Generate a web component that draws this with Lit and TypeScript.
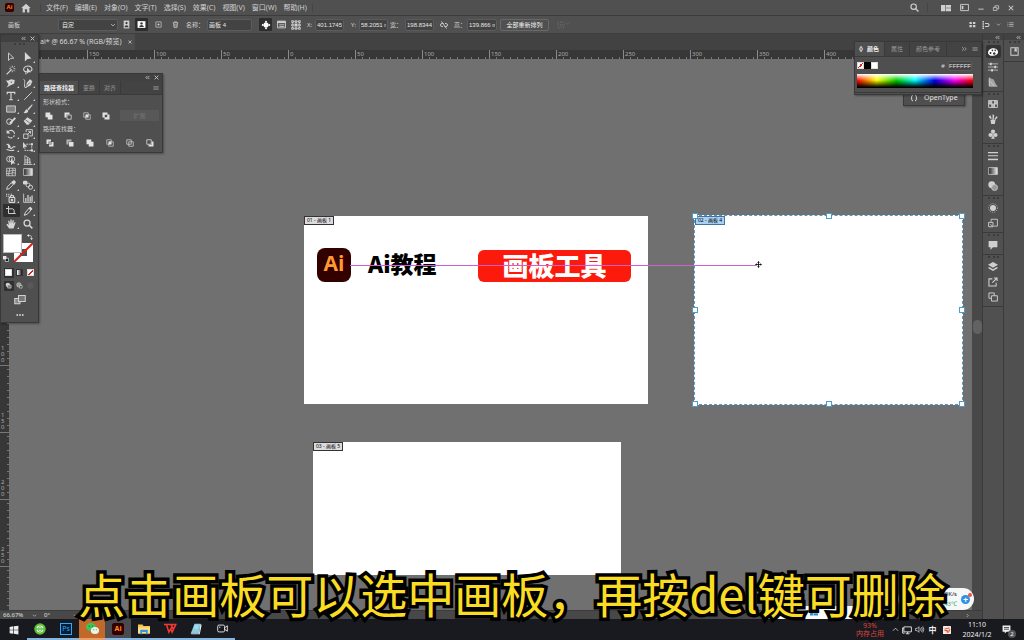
import { LitElement, html, css, svg, nothing } from "lit";
import { customElement, state } from "lit/decorators.js";
import { classMap } from "lit/directives/class-map.js";

// Every glyph is drawn on a 16 x 16 grid.
const GLYPHS: Record<string, unknown> = {
  home: svg`<path class="f" d="M8 1 15.5 8H13.4V15H9.8V10H6.2V15H2.6V8H.5Z"/>`,
  search: svg`<circle cx="6.5" cy="6.5" r="4.8" stroke-width="2"/><path d="m10 10 5 5" stroke-width="2.4"/>`,
  layout: svg`<path class="f" d="M0 3H7V13H0ZM8 3H16V7.5H8ZM8 8.5H16V13H8Z"/>`,
  window: svg`<path d="M1 2.5H15V13.5H1Z" stroke-width="1.6"/><path class="f" d="M3 5H6V11H3Z"/>`,
  min: svg`<path d="M1 11H15" stroke-width="2.4"/>`,
  restore: svg`<path d="M1 6.5H10V14.5H1ZM5 6V2H15V10.5H10.5" stroke-width="2"/>`,
  close: svg`<path d="M2 2 14 14M14 2 2 14" stroke-width="2.8"/>`,
  down: svg`<path d="m3 5.5 5 5 5-5" stroke-width="2"/>`,
  up: svg`<path d="m2 11 6-6 6 6" stroke-width="1.6"/>`,
  right: svg`<path d="m5.5 3 5 5-5 5" stroke-width="2"/>`,
  rewind: svg`<path d="M7.5 3 3 8l4.500 5M14 3 9.500 8l4.500 5" stroke-width="2.400"/>`,
  forward: svg`<path d="M3 3 7.500 8 3 13M9.500 3 14 8l-4.500 5" stroke-width="2"/>`,
  menu: svg`<path d="M1 4.500H15M1 8H15M1 11.500H15" stroke-width="1.500"/>`,
  portrait: svg`<path class="f" d="M3 1H13V15H3Z"/><circle class="k" cx="8" cy="5.500" r="2"/><path class="k" d="M4.500 13c0-5 7-5 7 0Z"/>`,
  landscape: svg`<path class="f" d="M1 2H15V14H1Z"/><circle class="k" cx="8" cy="6" r="2.200"/><path class="k" d="M4 12.500c0-5 8-5 8 0Z"/>`,
  add: svg`<path d="M2 2H14V14H2ZM8 5V11M5 8H11" stroke-width="1.500"/>`,
  trash: svg`<path d="M1.500 4H14.500M5.500 4V1.800H10.500V4M3.500 4.500 4.500 15H11.500L12.500 4.500M6.500 6.500V13M9.500 6.500V13" stroke-width="1.600"/>`,
  moveArt: svg`<path class="f" d="M4 4H12V12H4Z"/><path d="M8 0V16M0 8H16" stroke-width="2"/><path class="f" d="m8-1 3 4H5ZM8 17l3-4H5ZM-1 8l4-3v6ZM17 8l-4-3v6Z"/>`,
  list: svg`<path d="M1 2H15V14H1Z" stroke-width="1.600"/><path class="f" d="M1 2H15V5.500H1Z"/><path d="M4 8.500H13M4 11.500H13" stroke-width="1.500"/>`,
  refpoint: svg`<path d="M2.500 2.500H13.500V13.500H2.500Z" stroke-width="1"/><path d="M1 1H4V4H1ZM6.500 1H9.500V4H6.500ZM12 1H15V4H12ZM1 6.500H4V9.500H1ZM12 6.500H15V9.500H12ZM1 12H4V15H1ZM6.500 12H9.500V15H6.500ZM12 12H15V15H12Z" stroke-width="1.200"/><path class="f" d="M5.500 5.500H10.500V10.500H5.500Z"/>`,
  unlink: svg`<path d="M7 5H4a3 3 0 0 0 0 6h2M9 11h3a3 3 0 0 0 0-6h-2M3 1 13 15" stroke-width="1.800"/>`,
  dotGrid: svg`<path d="M2 2H14V14H2ZM8 2V14M2 8H14" stroke-width="1.500" stroke-dasharray="2 2"/>`,
  four: svg`<path class="f" d="M1 2H6.500V7H1ZM9 2H14.500V7H9ZM1 9H6.500V14H1ZM9 9H14.500V14H9Z"/>`,
  snap: svg`<path class="f" d="M1 0H4V3H1ZM1 4.500H4V7.500H1ZM1 9H4V12H1ZM1 13H4V16H1Z"/><path d="M6 5H11a3 3 0 0 1 0 6H6" stroke-width="2.200"/>`,
  bullets: svg`<path d="M1 4H3M5 4H15M1 8H3M5 8H15M1 12H3M5 12H15" stroke-width="1.500"/>`,
  select: svg`<path d="M4 1.500V13.500L7.300 10.300 12.500 9.800Z" stroke-width="1.400"/>`,
  direct: svg`<path class="f" d="M3 0V15L7.200 11 13.500 10.400Z"/>`,
  wand: svg`<path d="M1 15 9 7" stroke-width="2"/><path d="M10 1V4M10 8.500V11.500M5 6H8M12 6H15M6.500 2.500 8 4M12 4l2-2M12 8l2 2" stroke-width="1.300"/>`,
  lasso: svg`<path d="M6 11C1 11 .5 7 1.500 5 3.500 1 12 0 14 5c.8 2 0 4-2 5M6 10c-2 1-2 3-1 5" stroke-width="1.700"/><path class="f" d="M6.500 4V14L9 11.500 13 11.500Z"/>`,
  pen: svg`<path class="f" d="M0 4H4L8 2l6 1-1 6-5 2-7 4 3-5Z"/><circle class="k" cx="8.500" cy="6.500" r="1"/>`,
  curvature: svg`<path class="f" d="M5 15 6 8 11 2l4 3-3 7Z"/><path d="M1 2c4 3 0 7 2 13H6" stroke-width="1.500"/><path class="ks" d="m6 13 5-6" stroke-width="1"/>`,
  type: svg`<path d="M2 5V2.200H14V5M8 2.200V14M5 14H11" stroke-width="1.900"/>`,
  line: svg`<path d="M2 14 14 2" stroke-width="1.500"/>`,
  rect: svg`<path d="M1 3H15V13H1Z" fill="#808080" stroke-width="1.400"/>`,
  brush: svg`<path class="f" d="M14.500.5 7 8l2 2 6.500-8.500ZM6 8.500C3 9 4 12 .8 14.500c4 .5 8 0 7.500-4Z"/>`,
  shaper: svg`<circle cx="5.500" cy="9" r="4.500" stroke-width="1.600"/><path d="M6 12 15 3" stroke-width="3"/>`,
  eraser: svg`<path class="f" d="m1 8 6-6 8 5-6 7H6Z"/><path class="ks" d="m4 6 7 5.500" stroke-width="1"/>`,
  rotate: svg`<path d="M3 4.500A6 6 0 1 1 3 12" stroke-width="1.700" stroke-dasharray="14 2 3 2"/><path class="f" d="M1 1V7H7Z"/>`,
  scale: svg`<path d="M1 8H8V15H1ZM5 5V1H15V11H10M7 9l5-5M8.500 4H12V7.500" stroke-width="1.400"/>`,
  width: svg`<path d="M1 4c4-2 4 8 8 6s2-4 6-2M1 12c3 0 6 3 12 1" stroke-width="1.800"/><path class="f" d="M4 2 8 8 3 10Z"/>`,
  transform: svg`<path d="M5 3.500H14V13.500H3V8" stroke-width="1.300" stroke-dasharray="3 1"/><path class="f" d="M0 0V10L3 7.500H7ZM12.500 2H16V5H12.500ZM12.500 12H16V15H12.500Z"/>`,
  builder: svg`<circle cx="5.500" cy="6.500" r="4.500" stroke-width="1.400"/><circle cx="9.500" cy="6.500" r="4.500" stroke-width="1.400"/><path class="f" d="M8 6V16L10.500 13.500H15Z"/>`,
  perspective: svg`<path d="M3 1V15M3 1 11 6V15M3 8H11M7 4V15M1 15H15M3 11.500H13" stroke-width="1.300"/>`,
  mesh: svg`<path d="M1 2H15V14H1ZM1 6c4 3 9-3 14 0M1 10c4 3 9-3 14 0M5 2c3 4-3 8 0 12M10.500 2c3 4-3 8 0 12" stroke-width="1.200"/>`,
  gradient: svg`<defs><linearGradient id="tg"><stop stop-color="#222"/><stop offset="1" stop-color="#eee"/></linearGradient></defs><path d="M1 2.500H15V13.500H1Z" fill="url(#tg)" stroke-width="1.200"/>`,
  dropper: svg`<path d="m1 15 1-4 6.500-6.500 3 3L5 14Z" stroke-width="1.500"/><path class="f" d="m8 3 5-3 3 3-3 5Z"/>`,
  blend: svg`<rect class="f" x="0" y="1" width="7" height="6" rx="2"/><circle cx="8" cy="8" r="3.200" stroke-width="1.300"/><circle cx="12" cy="11.500" r="3.300" stroke-width="1.500"/>`,
  spray: svg`<rect x="5" y="7" width="9" height="8" rx="1" stroke-width="1.800"/><path d="M7 6.500V4H12V6.500M8.500 3V1M0 2H2M3.500 2H5.500M0 5H2M3 5H5" stroke-width="1.600"/><circle class="f" cx="9.500" cy="11" r="2"/>`,
  graph: svg`<path d="M1 1V15H15" stroke-width="1.300"/><path d="M4.500 14V8M8 14V3M11.500 14V6M14.500 14V4" stroke-width="2"/>`,
  artboard: svg`<path d="M4 0V12H15.500M0 4H4M4 4.500H11L13 6.500V12" stroke-width="1.500"/>`,
  slice: svg`<path d="M2 15 4 10 11 2l3 3-7 8Z" stroke-width="1.600"/><path class="f" d="m9 4 3-3 3 3-3 3Z"/>`,
  hand: svg`<path class="f" d="M5 15 1 9.500c-.5-1.500 1-2 2-1L4.500 10 3.500 3.500c0-1.500 1.700-1.500 2 0L6.500 7 7 1.500c0-1.500 2-1.500 2 0L9.200 7l1.300-4.500c.5-1.300 2.200-.9 2 .5L11.800 8l1.700-2.500c1-1 2.200 0 1.500 1.200L12 15Z"/>`,
  pfUnite: svg`<path class="f" d="M1 1H10.500V5.500H15V15H5.500V10.500H1Z"/>`,
  pfMinus: svg`<path class="f" d="M1 1H11V5H5V11H1Z"/><path d="M6 6H14.500V14.500H6Z" stroke-width="1.400"/>`,
  pfInter: svg`<path d="M1.500 1.500H10.500V10.500H1.500ZM5.500 5.500H14.500V14.500H5.500Z" stroke-width="1.200"/><path class="f" d="M5.500 5.500H10.500V10.500H5.500Z"/>`,
  pfExcl: svg`<path class="f" fill-rule="evenodd" d="M1 1H11V5H15V15H5V11H1ZM5.500 5.500V10.500H10.500V5.500Z"/>`,
  pfDivide: svg`<path class="f" d="M1 1H10V5H5V10H1ZM11 6H15V15H6V11H11Z"/><path d="M6.500 6.500H9.500V9.500H6.500Z" stroke-width="1.300"/>`,
  pfTrim: svg`<path class="f" opacity=".7" d="M1 1H11V5H5V11H1Z"/><path class="f" d="M6 6H15V15H6Z"/>`,
  pfOutline: svg`<path d="M1.500 1.500H10.500V10.500H1.500ZM5.500 5.500H14.500V14.500H5.500Z" stroke-width="1.300"/>`,
  pfBack: svg`<path d="M1.500 1.500H10.500V10.500H1.500Z" stroke-width="1.500"/><path class="f" d="M11.500 5H15V15H5V11.500H11.500Z"/>`,
  palette: svg`<path class="f" fill-rule="evenodd" d="M9 2C4 2 0 5 0 9c0 3 3 5 7 5 5 0 9-2 9-6 0-4-4-6-7-6ZM4 8a1.500 1.500 0 1 0 .1 0ZM7 4a1.300 1.300 0 1 0 .1 0ZM11.500 4a1.300 1.300 0 1 0 .1 0ZM10 8.500a2 2 0 1 0 .1 0Z"/>`,
  sliders: svg`<path d="M0 3H16M0 8H16M0 13H16" stroke-width="1.200"/><path class="f" d="M3 1H6V5H3ZM10 6H13V10H10ZM5 11H8V15H5Z"/>`,
  guide: svg`<path class="f" d="M2 1 9 4 14 14H2Z" opacity=".65"/><path d="M2 1V14.500H15M2 6 10 14" stroke-width="1.500"/>`,
  swatches: svg`<path d="M1 2.500H15V13.500H1ZM1 8H15M6 2.500V13.500M10.500 2.500V13.500" stroke-width="1.400"/><path class="f" d="M1 2.500H6V8H1ZM10.500 2.500H15V8H10.500ZM6 8H10.500V13.500H6Z" opacity=".8"/>`,
  brushes: svg`<path class="f" d="M4 9H12L11 16H5ZM7 9 7.500 0 10 2 9 9ZM4 8 1 4 4 2 6 7ZM10 8 14 3 15.500 5 12 9Z"/>`,
  club: svg`<circle class="f" cx="8" cy="4" r="3.300"/><circle class="f" cx="4" cy="9.500" r="3.300"/><circle class="f" cx="12" cy="9.500" r="3.300"/><path class="f" d="M7.200 6H8.800L9 11 11 15.500H5L7 11Z"/>`,
  lines: svg`<path d="M0 2.500H16M0 7.500H16" stroke-width="1.800"/><path d="M0 13.500H16" stroke-width="2.500"/>`,
  spheres: svg`<circle class="f" cx="6" cy="6" r="5.500"/><circle cx="10.500" cy="10.500" r="4.800" fill="#999" stroke-width="1.200"/>`,
  sun: svg`<circle class="f" cx="8" cy="8" r="4.800"/><circle cx="8" cy="8" r="7" stroke-width="1.200" stroke-dasharray="1.500 2"/>`,
  styles: svg`<path d="M5 6V2H15V13H9" stroke-width="1.400"/><path d="M1 7H8V14H1ZM4 10 7 13" stroke-width="1.500"/>`,
  comment: svg`<path class="f" d="M1 1.500H15V11.500H8L4 15.500V11.500H1Z"/>`,
  layers: svg`<path class="f" d="m8 0 8 4.500L8 9 0 4.500Z"/><path class="f" d="m2 8 6 3.500L14 8l2 1.500L8 14.500 0 9.500Z"/>`,
  exportIc: svg`<path d="M7 3H1.500V14.500H13V9M7 9 14 2M9.500 1.500H14.500V6.500" stroke-width="1.700"/>`,
  boards: svg`<path d="M10 6V1.500H1.500V10H5M5.500 6H15V14.500H5.500Z" stroke-width="1.500"/>`,
  library: svg`<path d="M1.500 1.500H14.500V14.500H1.500Z" stroke-width="1.800"/><path class="f" d="M8 2H12V9L10 7.500 8 9Z"/>`,
  swap: svg`<path d="M3 4H8Q12 4 12 9V12" stroke-width="1.700"/><path class="f" d="M5 0V8L0 4ZM8 11H16L12 16Z"/>`,
  defaults: svg`<path d="M6 6H14.500V14.500H6Z" fill="#111" stroke-width="1.800"/><path class="f" d="M0 0H9V9H0Z"/>`,
  modeN: svg`<circle class="f" cx="6.500" cy="6.500" r="5"/><path d="M6 7H14V14H6Z" fill="#777" stroke-width="1.400"/>`,
  modeO: svg`<circle cx="6.500" cy="6.500" r="5" fill="#999" stroke-width="1.300"/><path d="M8 8H14V14H8Z" fill="#555" stroke-width="1.400"/>`,
  modeI: svg`<circle cx="8" cy="8" r="6" stroke-width="1.200"/><path d="M5.500 5.500H10.500V10.500H5.500Z" stroke-width="1"/>`,
  screens: svg`<path d="M1 6H8V13H1Z" fill="#888" stroke-width="1.400"/><path d="M6 2H15V10H6Z" fill="#777" stroke-width="1.400"/>`,
  dots: svg`<circle class="f" cx="2.500" cy="8" r="1.900"/><circle class="f" cx="8" cy="8" r="1.900"/><circle class="f" cx="13.500" cy="8" r="1.900"/>`,
  cursor: svg`<path d="M8 2V14M2 8H14" stroke-width="2"/><path class="f" d="m8 0 3 4H5ZM8 16l3-4H5ZM0 8l4-3v6ZM16 8l-4-3v6Z"/>`,
  braces: svg`<path d="M6 2Q3 2 3 8t3 6M10 2q3 0 3 6t-3 6" stroke-width="1.700"/>`,
  // Taskbar glyphs carry their own colours.
  win: svg`<path class="f" d="M1 3 7 2V7.600H1ZM8 1.900 15 1V7.600H8ZM1 8.500H7V14L1 13.200ZM8 8.500H15V15L8 14.100Z"/>`,
  browser: svg`<circle cx="8" cy="8" r="7.700" fill="#5cbf3a" stroke="none"/><circle cx="8" cy="8" r="4.600" fill="#eaf8e0" stroke="none"/><path d="M3 8H13" stroke="#5cbf3a" stroke-width="2"/><path d="M5.500 6.500 8 4.500l2.500 2M5.500 9.500 8 11.500l2.500-2" stroke="#3aa02c"/>`,
  wechat: svg`<ellipse cx="6" cy="6" rx="6" ry="5.200" fill="#3fc456" stroke="none"/><ellipse cx="11" cy="10.500" rx="5" ry="4.400" fill="#e9f6e6" stroke="none"/><circle cx="4" cy="5" r=".8" fill="#165" stroke="none"/><circle cx="8" cy="5" r=".8" fill="#165" stroke="none"/><circle cx="9.500" cy="9.500" r=".7" fill="#576" stroke="none"/><circle cx="12.700" cy="9.500" r=".7" fill="#576" stroke="none"/>`,
  folder: svg`<path d="M0 2H6L7.500 4H16V14H0Z" fill="#f3c64c" stroke="none"/><path d="M0 6H16V14H0Z" fill="#fbdf8b" stroke="none"/><path d="M3 9H13V15H10.500V12H5.500V15H3Z" fill="#3b95dd" stroke="none"/>`,
  wps: svg`<path d="M0 3H8.500L11 8.500M3 3 6 12.500 10.500 4.500M8 8l2 4.500L14.500 3H9" stroke="#ef3a2d" stroke-width="1.900"/>`,
  note: svg`<path d="M6 1H14L12 14H1Z" fill="#8ccbdf" stroke="none"/><path d="m14 1 1.500 1.500L13 15H2L1 14H12Z" fill="#e8f4f8" stroke="none"/><path d="M6 4H11M5.500 6.500H10.500" stroke="#d7f2fa"/>`,
  camera: svg`<rect x="1" y="3" width="10" height="10" rx="2" stroke-width="1.300"/><path d="M11 7 15 4V12L11 9" stroke-width="1.300"/><circle class="f" cx="4" cy="6" r="1"/>`,
  monitor: svg`<path d="M3 3H15V11H3ZM6 14H12M9 11V14M3 5H0M1 5V13H4" stroke-width="1.400"/>`,
  speaker: svg`<path d="M1 6H4L7 3V13L4 10H1ZM9.500 6q1.500 2 0 4M11.500 4q3 4 0 8M13.700 2.500q4 5.500 0 11" stroke-width="1.200"/>`,
  ime: svg`<rect width="16" height="16" rx="1" fill="#f3ece6" stroke="none"/><path d="M3 6 13 4M3 9H8V13M10 8 9 13M14 6 11 13" stroke="#e2502f" stroke-width="2"/>`,
  notice: svg`<path class="f" d="M1 1H15V12H8L5 15V12H1Z"/><path d="M3.500 4.500H12.500M3.500 7.500H12.500" stroke="#1a1b20" stroke-width="1.300"/>`,
};

const icon = (name: string, size = 11) =>
  html`<svg class="ic" viewBox="0 0 16 16" width=${size} height=${size} aria-hidden="true">${GLYPHS[name]}</svg>`;

const MENUS = ["文件(F)", "编辑(E)", "对象(O)", "文字(T)", "选择(S)", "效果(C)", "视图(V)", "窗口(W)", "帮助(H)"];

const TOOLS = [
  "select", "direct", "wand", "lasso", "pen", "curvature", "type", "line", "rect", "brush",
  "shaper", "eraser", "rotate", "scale", "width", "transform", "builder", "perspective",
  "mesh", "gradient", "dropper", "blend", "spray", "graph", "artboard", "slice", "hand", "search",
];
const PLAIN_TOOLS = new Set(["select", "wand", "lasso", "mesh", "gradient", "artboard", "search"]);

const DOCK = [
  ["palette", "sliders", "guide"],
  ["swatches", "brushes", "club"],
  ["lines", "gradient", "spheres"],
  ["sun", "styles"],
  ["comment"],
  ["layers", "exportIc", "boards"],
];

const H_MARKS = [200, 150, 100, 50, 0, 50, 100, 150, 200, 250, 300, 350, 400];
const V_MARKS = ["", "", "", "", "100", "150", "200", "250", ""];
const HANDLES = ["nw", "n", "ne", "w", "e", "sw", "s", "se"];

@customElement("app-root")
export class AppRoot extends LitElement {
  @state() private tool = "artboard";

  static styles = css`
    :host {
      display: flex;
      flex-direction: column;
      height: 100vh;
      overflow: hidden;
      background: #505051;
      color: #d0d0d0;
      font: 6px/8px "Noto Sans", "Noto Sans CJK SC", sans-serif;
      position: relative;
    }
    * { box-sizing: border-box; }
    button, input, select {
      font: inherit;
      color: inherit;
      background: none;
      border: 0;
      padding: 0;
      margin: 0;
      border-radius: 0;
      min-width: 0;
      appearance: none;
      white-space: nowrap;
    }
    button { display: inline-flex; align-items: center; justify-content: center; }
    .ic { display: block; flex: none; fill: none; stroke: currentColor; overflow: visible; }
    .ic .f { fill: currentColor; stroke: none; }
    .ic .k { fill: #3a3a3a; stroke: none; }
    .ic .ks { stroke: #3a3a3a; }

    .menubar {
      flex: none;
      display: flex;
      align-items: center;
      height: 16px;
      padding: 0 6px 0 5px;
      border-bottom: 1px solid #3b3b3b;
      font-size: 7px;
    }
    .logo {
      width: 9px;
      height: 9px;
      border-radius: 2px;
      background: #330000;
      color: #ff7a18;
      font-weight: 700;
      font-size: 6px;
      text-align: center;
    }
    .home { margin: 0 9px 0 7px; }
    .menus { display: flex; gap: 7px; padding: 0 5px; border: solid #444; border-width: 0 1px; }
    .winctl { margin-left: auto; display: flex; align-items: center; }
    .winctl button { width: 15px; }
    .winctl .big { width: 18px; height: 12px; }
    .winctl .find { width: 24px; border-right: 1px solid #444; margin-right: 9px; }
    .winctl .find { padding-right: 2px; }

    .options {
      flex: none;
      display: grid;
      grid-template-columns: 50px 60px 17px 13px 20px 15px 24px 45px 20px 18px 11px 14px 29px 15px 29px 17px 29px 20px 13px 30px 52px 28px 1fr auto;
      align-items: center;
      height: 18px;
      padding: 0 10px 0 8px;
      border-bottom: 1px solid #3f3f3f;
    }
    .options > button, .options > .mid { display: flex; justify-content: center; }
    .options > label { text-align: right; padding-right: 3px; white-space: nowrap; }
    .field, .pick {
      height: 12px;
      width: 100%;
      background: #434343;
      border: 1px solid #5c5c5c;
      border-radius: 2px;
      padding: 0 1px;
      color: #e6e6e6;
      font-family: "Liberation Sans", "Noto Sans CJK SC", sans-serif;
    }
    .picker { position: relative; display: flex; }
    .pick { padding-left: 3px; }
    .picker .ic { position: absolute; right: 2px; top: 3px; pointer-events: none; }
    .lit { background: #2d2d2d; border-radius: 1px; height: 13px; width: 13px; justify-self: end; color: #fff; }
    .realign { justify-self: end; width: 49px; height: 12px; border: 1px solid #696969; border-radius: 2px; color: #f0f0f0; }
    .dim { color: #6d6d6d; }
    .endctl { display: flex; gap: 6px; align-items: center; }

    .work { flex: 1; min-height: 0; display: flex; position: relative; }
    .doc { flex: 1; min-width: 0; display: flex; flex-direction: column; background: #424242; }
    .tabs { flex: none; height: 16px; display: flex; padding-left: 39px; }
    .tab {
      display: flex;
      align-items: center;
      gap: 6px;
      background: #4d4d4d;
      padding: 0 3px 0 1px;
      font-size: 7px;
      white-space: nowrap;
      color: #d8d8d8;
    }
    .hruler {
      flex: none;
      height: 9px;
      display: flex;
      overflow: hidden;
      padding-left: 20px;
      background: #373737;
      color: #a8a8a8;
      line-height: 9px;
    }
    .hruler span {
      flex: none;
      width: 67px;
      padding-left: 1px;
      border-left: 1px solid #8a8a8a;
      background: repeating-linear-gradient(90deg, transparent 0 6px, #777 6px 7px) left bottom / 100% 2px no-repeat;
    }
    .stage { flex: 1; min-height: 0; display: flex; }
    .vruler {
      flex: none;
      width: 9px;
      overflow: hidden;
      display: flex;
      flex-direction: column;
      background: #373737;
      color: #a8a8a8;
      line-height: 6px;
    }
    .vruler span {
      flex: none;
      height: 67px;
      display: flex;
      flex-direction: column;
      justify-content: flex-end;
      padding: 0 0 2px 1px;
      border-bottom: 1px solid #777;
      background: repeating-linear-gradient(0deg, transparent 0 6px, #777 6px 7px) right bottom / 2px 100% no-repeat;
    }
    .vruler span:first-child { height: 39px; }
    .vruler i { font-style: normal; }
    .canvas { flex: 1; min-width: 0; position: relative; overflow: hidden; background: #707070; }
    .vscroll { flex: none; width: 10px; background: #484848; position: relative; }
    .thumb { position: absolute; left: 1px; right: 0; top: 261px; height: 14px; border-radius: 5px; background: #626264; }

    .board { position: absolute; background: #fff; color: #000; }
    .b1 { left: 295px; top: 157px; width: 344px; height: 188px; padding: 32px 17px 0 13px; display: flex; align-items: flex-start; }
    .b2 { left: 685px; top: 156px; width: 269px; height: 190px; border: 1px dashed #4f9ac6; }
    .b3 { left: 304px; top: 383px; width: 308px; height: 133px; }
    .tag {
      position: absolute;
      left: 0;
      top: 0;
      width: 30px;
      height: 9px;
      border: 1px solid #333;
      background: #dcdcdc;
      font-size: 5px;
      line-height: 7px;
      text-align: center;
      white-space: nowrap;
    }
    .b2 .tag { background: #a8d1f2; border-color: #3f76a5; }
    .h { position: absolute; width: 4px; height: 4px; margin: -2px; background: #fff; outline: 1px solid #4f9ac6; }
    .h.nw, .h.w, .h.sw { left: 0; }
    .h.n, .h.s { left: 50%; }
    .h.ne, .h.e, .h.se { left: 100%; }
    .h.nw, .h.n, .h.ne { top: 0; }
    .h.w, .h.e { top: 50%; }
    .h.sw, .h.s, .h.se { top: 100%; }
    .ailogo {
      width: 34px;
      height: 34px;
      border-radius: 8px;
      background: #330000;
      color: #ff9a2e;
      font: 700 21px/31px "Open Sans", "Noto Sans", sans-serif;
      text-align: center;
    }
    .title { margin-left: 17px; font: 900 23px/31px "Noto Sans CJK SC", sans-serif; }
    .badge {
      margin-left: auto;
      margin-top: 2px;
      width: 153px;
      height: 32px;
      border-radius: 6px;
      background: #fb1a0c;
      color: #fff;
      font: 900 26px/30px "Noto Sans CJK SC", sans-serif;
      text-align: center;
    }
    .guideline { position: absolute; left: 341px; top: 206px; width: 406px; height: 1px; background: #d05fd6; }
    .pointer { position: absolute; left: 746px; top: 202px; color: #111; }

    .status {
      flex: none;
      height: 9px;
      display: flex;
      align-items: center;
      gap: 7px;
      padding: 0 12px 0 3px;
      background: #484848;
      border-top: 1px solid #3c3c3c;
      line-height: 8px;
    }
    .status input { width: 22px; height: 8px; color: #e0e0e0; }
    .status .end { margin-left: auto; }

    .dock { flex: none; width: 21px; border-left: 1px solid #3a3a3a; background: #505051; display: flex; flex-direction: column; }
    .dock .fold { height: 6px; background: #424242; display: flex; align-items: center; justify-content: flex-end; padding-right: 3px; }
    .dgroup { display: flex; flex-direction: column; align-items: center; border-bottom: 1px solid #3a3a3a; padding-bottom: 2px; }
    .grip { width: 11px; height: 2px; margin: 1px auto; border-top: 2px dotted #3b3b3b; flex: none; }
    .dgroup button { width: 15px; height: 15px; color: #cfcfcf; }
    .dgroup button.on { background: #333; color: #fff; border-radius: 2px; height: 13px; margin: 1px 0; }

    .panel { position: absolute; background: #4f4f50; border: 1px solid #393939; box-shadow: 1px 1px 2px #0005; }
    .phead { display: flex; align-items: center; justify-content: flex-end; gap: 4px; background: #414141; height: 7px; padding-right: 3px; }
    .ptabs { display: flex; background: #434343; border-bottom: 1px solid #3a3a3a; color: #999; }
    .ptabs button { padding: 0 4px; border-right: 1px solid #3a3a3a; }
    .ptabs button.on { background: #4f4f50; color: #f0f0f0; font-weight: 700; }
    .ptabs .more { margin-left: auto; display: flex; align-items: center; gap: 5px; padding-right: 3px; color: #b0b0b0; }

    .tools { left: 0; top: 0; width: 39px; }
    .tgrid { display: grid; grid-template: repeat(14, 1fr) / 1fr 1fr; height: 179px; margin: 6px 2px 0; }
    .tgrid button { position: relative; color: #d6d6d6; }
    .tgrid button.on { background: #2f2f2f; border-radius: 1px; }
    .tgrid button.sub::after { content: ""; position: absolute; right: 1px; bottom: 1px; border: 1px solid; border-color: transparent #ccc #ccc transparent; }
    .paint { position: relative; height: 30px; margin: 4px 0 2px; color: #e8e8e8; }
    .paint .fill { position: absolute; left: 2px; top: 0; width: 19px; height: 19px; background: #fff; border: 1px solid #bbb; }
    .paint .stroke { position: absolute; left: 13px; top: 9px; }
    .paint .sw { position: absolute; left: 26px; top: 0; }
    .paint .df { position: absolute; left: 2px; top: 22px; }
    .trow { display: grid; grid-template-columns: repeat(3, 11px); height: 13px; padding-left: 2px; align-items: center; justify-items: center; }
    .trow button { width: 10px; height: 10px; }
    .trow button.on { background: #303030; }
    .chip { width: 7px; height: 7px; border: 1px solid #ddd; background: #fff; }
    .chip.g { background: linear-gradient(90deg, #fff, #111); border-color: #333; }
    .chip.n { background: linear-gradient(135deg, #fff 40%, #e0241b 40% 60%, #fff 60%); }
    .chip.b { background: #000; border-color: #000; }
    .tmore { display: flex; justify-content: center; height: 15px; align-items: center; }

    .path { left: 39px; top: 39px; width: 124px; height: 80px; }
    .path .ptabs { height: 14px; }
    .path .body { padding: 2px 3px 0; }
    .path .caption { height: 10px; line-height: 10px; }
    .prow { display: flex; align-items: center; height: 17px; }
    .prow button { flex: none; width: 19px; padding-right: 8px; color: #e2e2e2; }
    .prow.six { padding-left: 1px; }
    .prow.six button { width: 20px; }
    .prow .expand { width: 39px; height: 11px; padding: 0; margin-left: 1px; background: #585858; color: #737373; }

    .color { left: 854px; top: 7px; width: 128px; height: 54px; }
    .color .ptabs { height: 15px; }
    .color .ptabs button { padding: 0 6px; }
    .color .ptabs button:first-child { padding: 0 5px 0 3px; gap: 3px; }
    .crow { display: flex; align-items: center; padding: 3px 9px 3px 2px; height: 17px; }
    .crow label { margin-left: auto; padding-right: 3px; }
    .crow .field { width: 24px; height: 10px; padding: 0; text-align: center; }
    .spectrum {
      height: 14px;
      margin: 0 8px 0 2px;
      background:
        linear-gradient(#fff 0, #fff0 45%, #0000 45%, #000 95%),
        linear-gradient(90deg, #f00, #ff0 17%, #0c0 34%, #0ff 50%, #00e 67%, #f0f 84%, #f00);
    }
    .foot { margin-top: 4px; border-top: 1px solid #3a3a3a; }
    .otype { left: 903px; top: 50px; width: 62px; height: 22px; padding: 9px 6px 0; display: flex; gap: 6px; font-size: 7px; color: #e8e8e8; line-height: 8px; }

    .netpill {
      position: absolute;
      right: 50px;
      bottom: 30px;
      width: 76px;
      height: 22px;
      border-radius: 11px;
      background: #f6f8f7;
      color: #222;
      display: flex;
      align-items: center;
      justify-content: flex-end;
      gap: 4px;
      padding-right: 4px;
    }
    .netpill .temp { color: #2da860; }
    .netpill p { margin: 0; line-height: 10px; text-align: right; }
    .plus { width: 9px; height: 9px; border-radius: 50%; background: #2d8fe8; color: #fff; font: 700 9px/9px "Noto Sans", sans-serif; text-align: center; position: relative; }
    .plus::after { content: ""; position: absolute; right: -2px; top: -2px; width: 4px; height: 4px; border-radius: 50%; background: #f0503c; }
    .imebar { position: absolute; left: 764px; bottom: 21px; width: 100px; height: 13px; border-radius: 5px; background: #f8fafc; display: flex; align-items: center; justify-content: space-evenly; color: #2e8ecb; }

    .subtitle {
      position: absolute;
      left: 0;
      right: 0;
      bottom: 22px;
      margin: 0;
      text-align: center;
      white-space: nowrap;
      font: 400 47px/50px "Noto Sans CJK SC", sans-serif;
      color: #fadd22;
      -webkit-text-stroke: 7px #000;
      paint-order: stroke fill;
      stroke-linejoin: round;
      pointer-events: none;
    }

    .taskbar { flex: none; height: 21px; display: flex; background: #191a1f; color: #eee; }
    .taskbar .app { width: 26px; border-bottom: 2px solid #86b5dd; }
    .taskbar .start { width: 27px; }
    .taskbar .app.hot { background: #c2682b; border-color: #e9a06a; }
    .taskbar .app.cur { background: #4a4b50; }
    .sq { width: 12px; height: 12px; border: 1px solid #31a8ff; background: #001e36; color: #31a8ff; font-size: 7px; line-height: 10px; text-align: center; }
    .sq.ai { border-color: #330000; background: #330000; color: #ff8a1e; font-weight: 700; border-radius: 2px; }
    .tray { margin-left: auto; display: flex; align-items: center; gap: 3px; padding-right: 13px; }
    .mem { color: #d9463e; text-align: center; line-height: 8px; font-size: 7px; padding: 1px 5px 0 0; }
    .clock { width: 36px; text-align: center; font-size: 7px; line-height: 10px; padding: 0 2px; }
    .zh { font-size: 8px; font-weight: 700; width: 11px; text-align: center; }
    .tray .imeic { margin: 0 5px 0 2px; }
    .bell { position: relative; margin-left: 4px; }
    .count { position: absolute; right: -5px; bottom: -4px; width: 8px; height: 8px; border-radius: 50%; background: #55565a; text-align: center; font-size: 6px; line-height: 8px; }
  `;

  private field(id: string, label: string, value: string) {
    return html`<label for=${id}>${label}</label><input id=${id} class="field" .value=${value} />`;
  }

  private renderTop() {
    return html`
      <header class="menubar">
        <span class="logo">Ai</span>
        <span class="home">${icon("home", 10)}</span>
        <nav class="menus">${MENUS.map((m) => html`<button>${m}</button>`)}</nav>
        <div class="winctl">
          <button class="find" aria-label="搜索">${icon("search", 9)}</button>
          <button class="big" aria-label="排列文档">${icon("layout", 10)}</button>
          <button class="big" aria-label="工作区">${icon("window", 9)}</button>
          <button aria-label="最小化">${icon("min", 6)}</button>
          <button aria-label="还原">${icon("restore", 6)}</button>
          <button aria-label="关闭">${icon("close", 6)}</button>
        </div>
      </header>
      <section class="options">
        <span>画板</span>
        <span class="picker">
          <select class="pick" aria-label="预设"><option>自定</option></select>${icon("down", 6)}
        </span>
        <button aria-label="纵向">${icon("portrait", 9)}</button>
        <button class="lit" aria-label="横向">${icon("landscape", 9)}</button>
        <button aria-label="新建画板">${icon("add", 7)}</button>
        <button aria-label="删除画板">${icon("trash", 7)}</button>
        ${this.field("name", "名称：", "画板 4")}
        <button class="lit" aria-label="移动/复制带画板的图稿">${icon("moveArt", 8)}</button>
        <button aria-label="画板选项">${icon("list", 9)}</button>
        <span class="mid">${icon("refpoint", 10)}</span>
        ${this.field("x", "X:", "401.1745")}
        ${this.field("y", "Y:", "58.2051 m")}
        ${this.field("w", "宽：", "198.8344")}
        <button aria-label="约束比例">${icon("unlink", 8)}</button>
        ${this.field("hh", "高：", "139.866 m")}
        <button class="realign">全部重新排列</button>
        <span class="mid dim">${icon("dotGrid", 8)}${icon("down", 5)}</span>
        <span></span>
        <span class="endctl">${icon("four", 7)}${icon("snap", 8)}${icon("down", 5)}${icon("bullets", 7)}</span>
      </section>`;
  }

  private renderCanvas() {
    return html`
      <main class="canvas">
        <article class="board b1">
          <span class="tag">01 - 画板 1</span>
          <div class="ailogo">Ai</div>
          <div class="title">Ai教程</div>
          <div class="badge">画板工具</div>
        </article>
        <article class="board b2">
          <span class="tag">02 - 画板 4</span>
          ${HANDLES.map((h) => html`<i class="h ${h}"></i>`)}
        </article>
        <article class="board b3"><span class="tag">03 - 画板 5</span></article>
        <div class="guideline"></div>
        <div class="pointer">${icon("cursor", 7)}</div>
      </main>`;
  }

  private renderTools() {
    return html`
      <aside class="panel tools">
        <div class="phead">${icon("rewind", 5)}${icon("close", 5)}</div>
        <div class="grip"></div>
        <div class="tgrid">
          ${TOOLS.map(
            (t) => html`<button
              class=${classMap({ on: t === this.tool, sub: !PLAIN_TOOLS.has(t) })}
              aria-label=${t}
              @click=${() => (this.tool = t)}
            >${icon(t, 10)}</button>`
          )}
        </div>
        <div class="paint">
          <svg class="stroke" width="19" height="19" viewBox="0 0 19 19">
            <path d="M0 0H19V19H0ZM6 6V13H13V6Z" fill="#fff" fill-rule="evenodd" />
            <path d="M0 19 19 0" stroke="#d3241c" stroke-width="2" />
          </svg>
          <span class="fill"></span>
          <span class="sw">${icon("swap", 6)}</span>
          <span class="df">${icon("defaults", 6)}</span>
        </div>
        <div class="trow">
          <button class="on" aria-label="颜色"><i class="chip"></i></button>
          <button aria-label="渐变"><i class="chip g"></i></button>
          <button aria-label="无"><i class="chip n"></i></button>
        </div>
        <div class="trow">
          <button class="on" aria-label="正常绘图">${icon("modeN", 7)}</button>
          <button aria-label="背面绘图">${icon("modeO", 7)}</button>
          <button class="dim" aria-label="内部绘图">${icon("modeI", 7)}</button>
        </div>
        <div class="tmore">${icon("screens", 12)}</div>
        <div class="tmore">${icon("dots", 8)}</div>
      </aside>`;
  }

  private renderPanels() {
    return html`
      <aside class="panel path">
        <div class="phead">${icon("rewind", 5)}${icon("close", 5)}</div>
        <div class="ptabs">
          <button class="on">路径查找器</button><button>变换</button><button>对齐</button>
          <span class="more">${icon("menu", 6)}</span>
        </div>
        <div class="body">
          <div class="caption">形状模式：</div>
          <div class="prow">
            ${["pfUnite", "pfMinus", "pfInter", "pfExcl"].map((n) => html`<button aria-label=${n}>${icon(n, 8)}</button>`)}
            <button class="expand" disabled>扩展</button>
          </div>
          <div class="caption">路径查找器：</div>
          <div class="prow six">
            ${["pfDivide", "pfTrim", "pfUnite", "pfInter", "pfOutline", "pfBack"].map(
              (n) => html`<button aria-label=${n}>${icon(n, 8)}</button>`
            )}
          </div>
        </div>
      </aside>
      <aside class="panel otype">${icon("braces", 8)}<span>OpenType</span></aside>
      <aside class="panel color">
        <div class="ptabs">
          <button class="on"><span>◊</span>颜色</button><button>属性</button><button>颜色参考</button>
          <span class="more">${icon("forward", 6)}${icon("menu", 6)}</span>
        </div>
        <div class="crow">
          <i class="chip n"></i><i class="chip b"></i><i class="chip"></i>
          <label for="hex">#</label><input id="hex" class="field" value="FFFFFF" />
        </div>
        <div class="spectrum"></div>
        <div class="foot"></div>
      </aside>`;
  }

  private renderTaskbar() {
    const apps = [
      { body: icon("browser", 12) },
      { body: html`<span class="sq">Ps</span>` },
      { body: icon("wechat", 13), cls: "hot" },
      { body: html`<span class="sq ai">Ai</span>`, cls: "cur" },
      { body: icon("folder", 12) },
      { body: icon("wps", 13) },
      { body: icon("note", 12) },
      { body: icon("camera", 11) },
    ];
    return html`
      <footer class="taskbar">
        <button class="start" aria-label="开始">${icon("win", 10)}</button>
        ${apps.map((a) => html`<button class="app ${a.cls ?? ""}">${a.body}</button>`)}
        <div class="tray">
          <span class="mem">93%<br />内存占用</span>
          ${icon("up", 7)}
          ${icon("monitor", 10)}
          ${icon("speaker", 9)}
          <span class="zh">中</span>
          <span class="imeic">${icon("ime", 8)}</span>
          <time class="clock">11:10<br />2024/1/2</time>
          <span class="bell">${icon("notice", 9)}<span class="count">2</span></span>
        </div>
      </footer>`;
  }

  render() {
    return html`
      ${this.renderTop()}
      <div class="work">
        <div class="doc">
          <div class="tabs"><span class="tab">ai* @ 66.67 % (RGB/预览) ${icon("close", 4)}</span></div>
          <div class="hruler">${H_MARKS.map((m) => html`<span>${m}</span>`)}</div>
          <div class="stage">
            <div class="vruler">
              ${V_MARKS.map((m) => html`<span>${m ? [...m].map((c) => html`<i>${c}</i>`) : nothing}</span>`)}
            </div>
            ${this.renderCanvas()}
            <div class="vscroll"><div class="thumb"></div></div>
          </div>
          <div class="status">
            <input aria-label="缩放" value="66.67%" />${icon("down", 5)}
            <input aria-label="旋转" value="0°" />${icon("down", 5)}
            <span class="end">${icon("right", 5)}</span>
          </div>
        </div>
        <aside class="dock">
          <div class="fold">${icon("rewind", 5)}</div>
          ${DOCK.map(
            (g) => html`<div class="dgroup">
              <div class="grip"></div>
              ${g.map((n) => html`<button class=${classMap({ on: n === "palette" })} aria-label=${n}>${icon(n, 10)}</button>`)}
            </div>`
          )}
        </aside>
        <aside class="dock">
          <div class="fold">${icon("rewind", 5)}</div>
          <div class="dgroup"><div class="grip"></div><button aria-label="库">${icon("library", 9)}</button></div>
        </aside>
        ${this.renderTools()} ${this.renderPanels()}
      </div>
      ${this.renderTaskbar()}
      <div class="imebar">${icon("moveArt", 6)}${icon("layout", 8)}${icon("club", 7)}</div>
      <div class="netpill">
        <p>0K/s<br /><span class="temp">43℃</span></p>
        <span class="plus">+</span>
      </div>
      <p class="subtitle">点击画板可以选中画板，再按del键可删除</p>
    `;
  }
}
